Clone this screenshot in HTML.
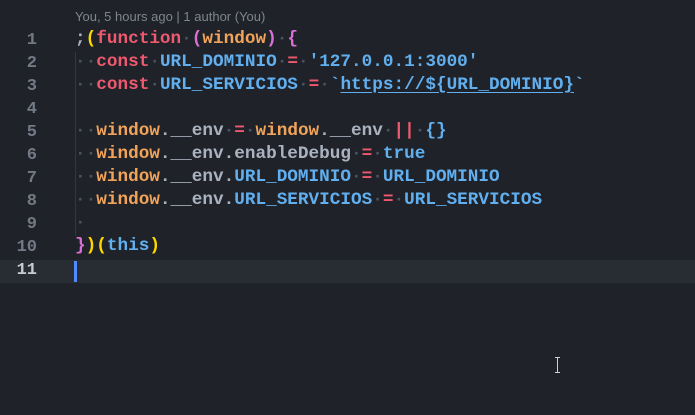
<!DOCTYPE html><html><head><style>
body{margin:0;width:695px;height:415px;background:#1f2329;overflow:hidden;font-family:"Liberation Mono",monospace;}
.blame{position:absolute;left:75px;top:9px;font:13px "Liberation Sans",sans-serif;color:#7f848e}
.cur{position:absolute;left:0;top:260px;width:695px;height:23px;background:#282c33}
.caret{position:absolute;left:74px;top:261px;width:3px;height:21px;background:#528bff}
.guide{position:absolute;left:75px;top:52px;width:1px;height:184px;background:#333840}
.ln{position:absolute;left:0;width:37px;text-align:right;font-weight:bold;font-size:17px;color:#737a85}
.code{position:absolute;left:75px;font-size:17.7px;font-weight:bold;white-space:pre;color:#abb2bf}
.d{color:#4b5261}.k{color:#ef596f}.v{color:#61afef}.o{color:#f2a35a}.s{color:#61afef}
.y{color:#ffd700}.p{color:#da70d6}.u{text-decoration:underline;text-underline-offset:3px}
</style></head><body>
<div class="blame">You, 5 hours ago | 1 author (You)</div>
<div class="cur"></div><div class="guide"></div><div class="caret"></div>
<div class="ln" style="top:31px">1</div><div class="ln" style="top:54px">2</div><div class="ln" style="top:77px">3</div><div class="ln" style="top:100px">4</div><div class="ln" style="top:123px">5</div><div class="ln" style="top:146px">6</div><div class="ln" style="top:169px">7</div><div class="ln" style="top:192px">8</div><div class="ln" style="top:215px">9</div><div class="ln" style="top:238px">10</div><div class="ln" style="top:261px;color:#c8ccd2">11</div>
<div class="code" style="top:29px">;<span class="y">(</span><span class="k">function</span><span class="d">·</span><span class="p">(</span><span class="o">window</span><span class="p">)</span><span class="d">·</span><span class="p">{</span></div>
<div class="code" style="top:52px"><span class="d">··</span><span class="k">const</span><span class="d">·</span><span class="v">URL_DOMINIO</span><span class="d">·</span><span class="k">=</span><span class="d">·</span><span class="s">'127.0.0.1:3000'</span></div>
<div class="code" style="top:75px"><span class="d">··</span><span class="k">const</span><span class="d">·</span><span class="v">URL_SERVICIOS</span><span class="d">·</span><span class="k">=</span><span class="d">·</span><span class="s">`<span class="u">https://${URL_DOMINIO}</span>`</span></div>
<div class="code" style="top:121px"><span class="d">··</span><span class="o">window</span>.__env<span class="d">·</span><span class="k">=</span><span class="d">·</span><span class="o">window</span>.__env<span class="d">·</span><span class="k">||</span><span class="d">·</span><span class="v">{}</span></div>
<div class="code" style="top:144px"><span class="d">··</span><span class="o">window</span>.__env.enableDebug<span class="d">·</span><span class="k">=</span><span class="d">·</span><span class="v">true</span></div>
<div class="code" style="top:167px"><span class="d">··</span><span class="o">window</span>.__env.<span class="v">URL_DOMINIO</span><span class="d">·</span><span class="k">=</span><span class="d">·</span><span class="v">URL_DOMINIO</span></div>
<div class="code" style="top:190px"><span class="d">··</span><span class="o">window</span>.__env.<span class="v">URL_SERVICIOS</span><span class="d">·</span><span class="k">=</span><span class="d">·</span><span class="v">URL_SERVICIOS</span></div>
<div class="code" style="top:213px"><span class="d">·</span></div>
<div class="code" style="top:236px"><span class="p">}</span><span class="y">)(</span><span class="v">this</span><span class="y">)</span></div>
<div style="position:absolute;left:557px;top:357px;width:1px;height:16px;background:#d0d0d0"></div>
<div style="position:absolute;left:555px;top:357px;width:5px;height:1px;background:#d0d0d0"></div>
<div style="position:absolute;left:555px;top:372px;width:5px;height:1px;background:#d0d0d0"></div>
</body></html>
